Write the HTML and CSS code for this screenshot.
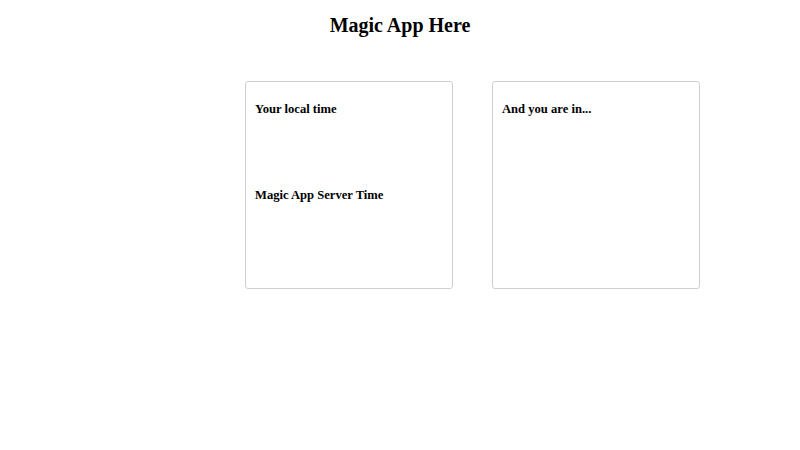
FILE: index.html
```html
<!DOCTYPE html>
<html>
<head>
<meta charset="utf-8">
<title>Magic App</title>
<link rel="stylesheet" href="styles.css">
</head>
<body>
<h1 class="title">Magic App Here</h1>
<div class="cards">
  <div class="card">
    <h3 class="card-heading">Your local time</h3>
    <div class="time-slot"></div>
    <h3 class="card-heading">Magic App Server Time</h3>
  </div>
  <div class="card">
    <h3 class="card-heading">And you are in...</h3>
  </div>
</div>
</body>
</html>
```
FILE: styles.css
```css
html, body {
  margin: 0;
  padding: 0;
  background: #fff;
}
body {
  font-family: "Liberation Serif", "Times New Roman", serif;
  color: #000;
}
.title {
  margin: 13px 0 0 0;
  font-size: 20px;
  line-height: 24px;
  font-weight: bold;
  text-align: center;
}
.cards {
  display: flex;
  gap: 39px;
  padding-left: 245px;
  margin-top: 44px;
}
.card {
  box-sizing: border-box;
  width: 208px;
  height: 208px;
  border: 1px solid #cfcfcf;
  border-radius: 3px;
  padding: 19px 9px 10px 9px;
}
.card-heading {
  margin: 0;
  font-size: 12.6px;
  line-height: 16px;
  font-weight: bold;
}
.time-slot {
  height: 70px;
}
```
